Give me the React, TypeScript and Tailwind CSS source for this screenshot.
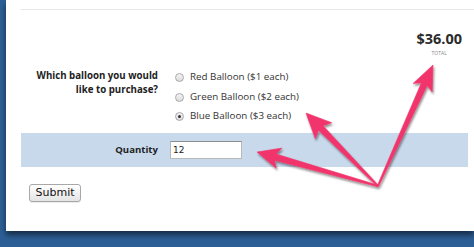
import React from 'react';

type Arrow = { tx: number; ty: number; head: number; wing: number };

const origin = { x: 378, y: 186 };

const arrows: Arrow[] = [
  { tx: 433, ty: 65, head: 21, wing: 10.5 },
  { tx: 306, ty: 113, head: 21, wing: 11.5 },
  { tx: 257, ty: 152, head: 19, wing: 10.5 },
];

// polygon for a tapered arrow running from the shared origin to its tip
const arrowPoints = ({ tx, ty, head, wing }: Arrow) => {
  const dx = tx - origin.x;
  const dy = ty - origin.y;
  const len = Math.hypot(dx, dy);
  const ux = dx / len;
  const uy = dy / len;
  const nx = -uy;
  const ny = ux;
  const bx = tx - ux * head;
  const by = ty - uy * head;
  const shaft = 3.2;
  const pts = [
    [origin.x + nx * 0.8, origin.y + ny * 0.8],
    [bx + nx * shaft, by + ny * shaft],
    [bx - ux * 4 + nx * wing, by - uy * 4 + ny * wing],
    [tx, ty],
    [bx - ux * 4 - nx * wing, by - uy * 4 - ny * wing],
    [bx - nx * shaft, by - ny * shaft],
    [origin.x - nx * 0.8, origin.y - ny * 0.8],
  ];
  return pts.map(p => p.join(',')).join(' ');
};

const Radio = ({ checked }: { checked?: boolean }) => (
  <span className="flex h-[9px] w-[9px] items-center justify-center rounded-full border border-[#a9a9a9] bg-gradient-to-b from-[#f4f4f4] to-[#dcdcdc]">
    {checked && <span className="h-[3px] w-[3px] rounded-full bg-[#333]" />}
  </span>
);

const options = [
  { label: 'Red Balloon ($1 each)' },
  { label: 'Green Balloon ($2 each)' },
  { label: 'Blue Balloon ($3 each)', checked: true },
];

const App = () => {
  return (
    <div className="relative h-[247px] w-[474px] overflow-hidden bg-[#2d5f97]" style={{ fontFamily: '"Open Sans", sans-serif' }}>
      <div className="ml-[6px] h-[231px] bg-white pl-[15px] shadow-[0_4px_6px_rgba(0,0,0,0.55)]">
        <div className="pt-[9px]">
          <div className="border-t border-[#e6e6e6]" />
        </div>

        <div className="flex justify-end pr-[12px] pt-[21px]">
          <div className="flex flex-col items-center">
            <span className="text-[14.5px] font-bold leading-[16px] text-[#2b2b2b]">$36.00</span>
            <span className="mt-[3px] text-[5px] leading-[6px] text-[#888]">TOTAL</span>
          </div>
        </div>

        <div className="mt-[13px] flex">
          <div className="w-[137px] text-right text-[9.7px] font-bold leading-[14px] text-[#222]">
            Which balloon you would
            <br />
            like to purchase?
          </div>
          <div className="ml-[17px] flex flex-col gap-[6.5px] pt-[2px]">
            {options.map(o => (
              <label key={o.label} className="flex h-[13px] items-center gap-[6px] text-[9.8px] text-[#333]">
                <Radio checked={o.checked} />
                {o.label}
              </label>
            ))}
          </div>
        </div>

        <div className="mr-[6px] mt-[10px] flex h-[34px] items-center bg-[#c8d9ec]">
          <span className="w-[137px] text-right text-[9.6px] font-bold text-[#222]">Quantity</span>
          <input
            defaultValue="12"
            className="ml-[12px] h-[18px] w-[72px] border border-[#b9b9b9] border-t-[#8e8e8e] bg-white px-[2px] text-[9px] text-[#222] outline-none"
            style={{ fontFamily: '"DejaVu Sans", sans-serif' }}
          />
        </div>

        <div className="pl-[8px] pt-[17px]">
          <button
            className="flex h-[18px] w-[52px] items-center justify-center rounded-[3px] border border-[#a8a8a8] bg-gradient-to-b from-white to-[#e4e4e4] text-[11px] text-[#111] shadow-[0_1px_0_rgba(0,0,0,0.08)]"
            style={{ fontFamily: '"DejaVu Sans", sans-serif' }}
          >
            Submit
          </button>
        </div>
      </div>

      <svg className="pointer-events-none absolute inset-0" width="474" height="247" viewBox="0 0 474 247">
        <defs>
          <filter id="arrowShadow" x="-20%" y="-20%" width="140%" height="140%">
            <feDropShadow dx="1" dy="2" stdDeviation="1.2" floodColor="#000" floodOpacity="0.45" />
          </filter>
        </defs>
        <g filter="url(#arrowShadow)" fill="#f1356c" stroke="#f1356c" strokeWidth="0.6" strokeLinejoin="round">
          {arrows.map((a, i) => (
            <polygon key={i} points={arrowPoints(a)} />
          ))}
        </g>
      </svg>
    </div>
  );
};

export default App;
